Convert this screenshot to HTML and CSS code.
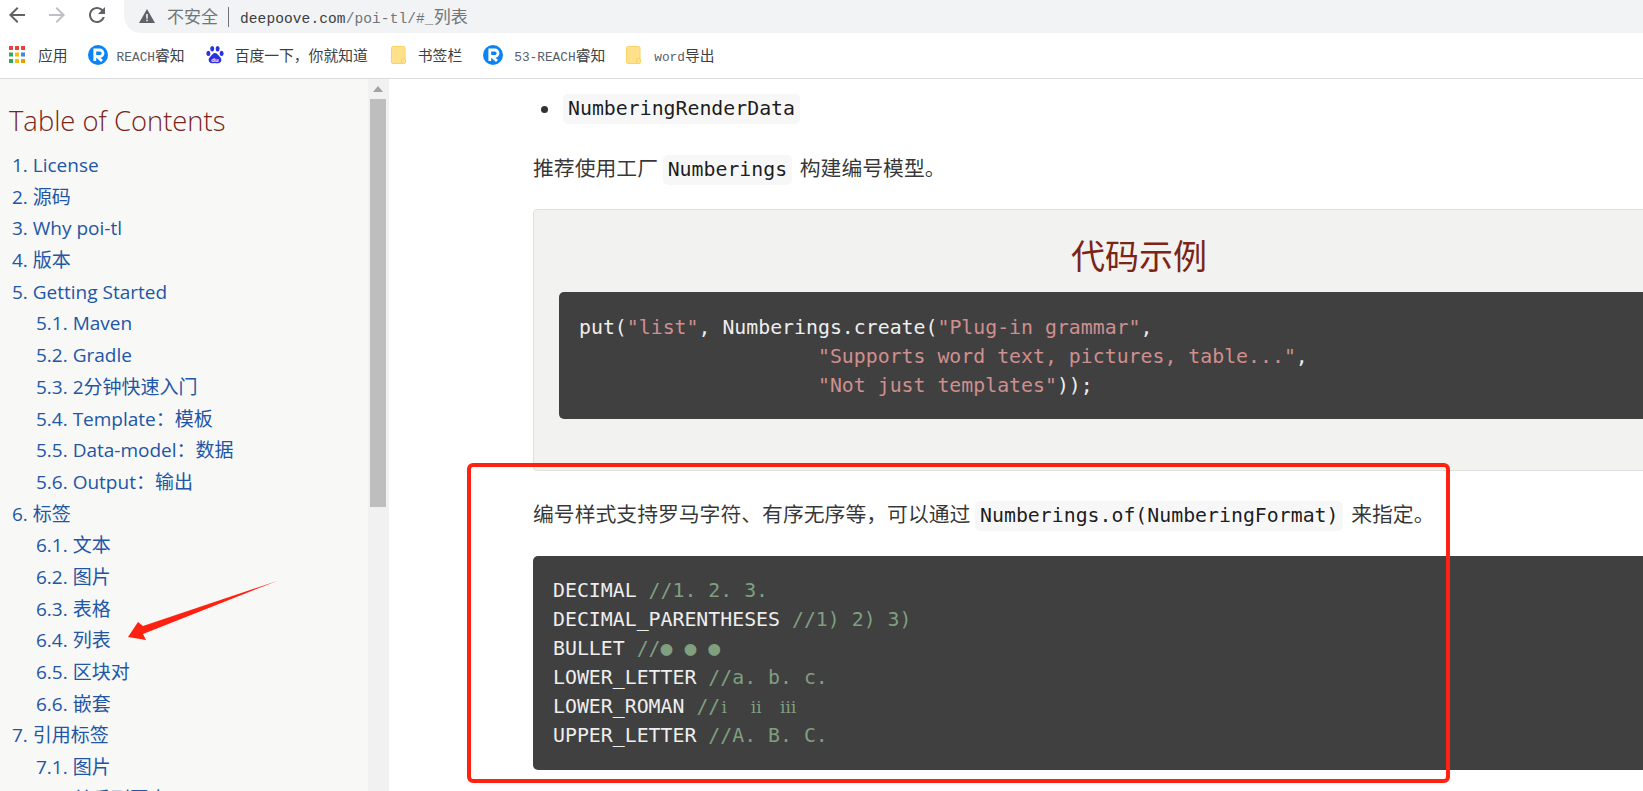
FILE: index.html
```html
<!DOCTYPE html>
<html lang="zh">
<head>
<meta charset="utf-8">
<title>poi-tl</title>
<link rel="stylesheet" href="styles.css">
</head>
<body>
<header class="toolbar">
  <div class="nav-btn"><svg viewBox="0 0 24 24" width="24" height="24"><path class="ic-dark" d="M20 11H7.83l5.59-5.59L12 4l-8 8 8 8 1.41-1.41L7.83 13H20v-2z"/></svg></div>
  <div class="nav-btn"><svg viewBox="0 0 24 24" width="24" height="24"><path class="ic-off" d="M12 4l-1.41 1.41L16.17 11H4v2h12.17l-5.58 5.59L12 20l8-8z"/></svg></div>
  <div class="nav-btn"><svg viewBox="0 0 24 24" width="24" height="24"><path class="ic-dark" d="M17.65 6.35C16.2 4.9 14.21 4 12 4c-4.42 0-7.99 3.58-7.99 8s3.57 8 7.99 8c3.73 0 6.84-2.55 7.73-6h-2.08c-.82 2.33-3.04 4-5.65 4-3.31 0-6-2.69-6-6s2.69-6 6-6c1.66 0 3.14.69 4.22 1.78L13 11h7V4l-2.35 2.35z"/></svg></div>
  <div class="omnibox">
    <svg class="warn" viewBox="0 0 16 16" width="16" height="16"><path class="ic-dark" d="M0 15 L8 1 L16 15 Z"/><rect x="7.2" y="6" width="1.6" height="4.6" fill="#f1f3f4"/><rect x="7.2" y="11.6" width="1.6" height="1.6" fill="#f1f3f4"/></svg>
    <span class="insecure">不安全</span>
    <span class="sep"></span>
    <span class="url"><span class="host">deepoove.com</span>/poi-tl/#_<span class="url-cjk">列表</span></span>
  </div>
</header>

<nav class="bookmarks">
  <div class="bm bm-apps">
    <svg viewBox="0 0 16 17" width="16" height="17">
      <rect x="0" y="0" width="4" height="4" fill="#ea4335"/><rect x="6" y="0" width="4" height="4" fill="#ea4335"/><rect x="12" y="0" width="4" height="4" fill="#ea4335"/>
      <rect x="0" y="6.5" width="4" height="4" fill="#34a853"/><rect x="6" y="6.5" width="4" height="4" fill="#fbbc05"/><rect x="12" y="6.5" width="4" height="4" fill="#4285f4"/>
      <rect x="0" y="13" width="4" height="4" fill="#34a853"/><rect x="6" y="13" width="4" height="4" fill="#fbbc05"/><rect x="12" y="13" width="4" height="4" fill="#f29900"/>
    </svg>
    <span>应用</span>
  </div>
  <div class="bm bm-reach">
    <svg viewBox="0 0 20 20" width="20" height="20"><circle cx="10" cy="10" r="10" fill="#0a84f5"/><path d="M6.800 16V5h5a3.200 3.200 0 0 1 0 6.400H9l5 4.600" fill="none" stroke="#fff" stroke-width="2.800"/></svg>
    <span><span class="lat">REACH</span>睿知</span>
  </div>
  <div class="bm bm-baidu">
    <svg viewBox="0 0 18 18" width="18" height="18"><ellipse cx="2.4" cy="7.4" rx="2" ry="2.6" fill="#2932e1"/><ellipse cx="6.2" cy="2.8" rx="2" ry="2.7" fill="#2932e1"/><ellipse cx="11.6" cy="2.8" rx="2" ry="2.7" fill="#2932e1"/><ellipse cx="15.6" cy="7.4" rx="2" ry="2.6" fill="#2932e1"/><path d="M9 7c-2 0-3 2-4.500 3.500C3 12 2.500 13 2.700 14.600 3 16.600 5 17.500 6.500 17.300c1-.1 1.800-.4 2.500-.4s1.500.3 2.500.4c1.500.2 3.500-.7 3.800-2.700.2-1.600-.3-2.600-1.800-4.100C12 9 11 7 9 7z" fill="#2932e1"/><text x="9" y="15.500" class="du">du</text></svg>
    <span>百度一下，你就知道</span>
  </div>
  <div class="bm bm-f1">
    <svg viewBox="0 0 15 18" width="15" height="18"><rect x=".5" y=".5" width="13.500" height="17" rx="1.500" class="folder"/><rect x="10.500" y="12.500" width="4" height="5" rx="1.500" class="folder"/></svg>
    <span>书签栏</span>
  </div>
  <div class="bm bm-reach2">
    <svg viewBox="0 0 20 20" width="20" height="20"><circle cx="10" cy="10" r="10" fill="#0a84f5"/><path d="M6.800 16V5h5a3.200 3.200 0 0 1 0 6.400H9l5 4.600" fill="none" stroke="#fff" stroke-width="2.800"/></svg>
    <span><span class="lat">53-REACH</span>睿知</span>
  </div>
  <div class="bm bm-f2">
    <svg viewBox="0 0 15 18" width="15" height="18"><rect x=".5" y=".5" width="13.500" height="17" rx="1.500" class="folder"/><rect x="10.500" y="12.500" width="4" height="5" rx="1.500" class="folder"/></svg>
    <span><span class="lat">word</span>导出</span>
  </div>
</nav>

<div class="page">
  <aside class="sidebar">
    <div class="toc">
      <h2 class="toc-title">Table of Contents</h2>
      <ul class="toc-list">
        <li><a>1. License</a></li>
        <li><a>2. 源码</a></li>
        <li><a>3. Why poi-tl</a></li>
        <li><a>4. 版本</a></li>
        <li><a>5. Getting Started</a>
          <ul>
            <li><a>5.1. Maven</a></li>
            <li><a>5.2. Gradle</a></li>
            <li><a>5.3. 2分钟快速入门</a></li>
            <li><a>5.4. Template<span class="colon">：</span>模板</a></li>
            <li><a>5.5. Data-model<span class="colon">：</span>数据</a></li>
            <li><a>5.6. Output<span class="colon">：</span>输出</a></li>
          </ul>
        </li>
        <li><a>6. 标签</a>
          <ul>
            <li><a>6.1. 文本</a></li>
            <li><a>6.2. 图片</a></li>
            <li><a>6.3. 表格</a></li>
            <li><a>6.4. 列表</a></li>
            <li><a>6.5. 区块对</a></li>
            <li><a>6.6. 嵌套</a></li>
          </ul>
        </li>
        <li><a>7. 引用标签</a>
          <ul>
            <li><a>7.1. 图片</a></li>
            <li><a>7.2. 单系列图表</a></li>
          </ul>
        </li>
      </ul>
    </div>
    <div class="scrollbar">
      <div class="scroll-arrow"></div>
      <div class="scroll-thumb"></div>
    </div>
  </aside>

  <main class="content">
    <ul class="bullets">
      <li><code>NumberingRenderData</code></li>
    </ul>
    <p class="para para-first">推荐使用工厂 <code>Numberings</code> 构建编号模型。</p>
    <section class="example">
      <h3 class="example-title">代码示例</h3>
      <pre class="listing listing-inner">put(<span class="str">"list"</span>, Numberings.create(<span class="str">"Plug-in grammar"</span>,
                    <span class="str">"Supports word text, pictures, table..."</span>,
                    <span class="str">"Not just templates"</span>));</pre>
    </section>
    <p class="para para-second">编号样式支持罗马字符、有序无序等，可以通过 <code>Numberings.of(NumberingFormat)</code> 来指定。</p>
    <pre class="listing listing-wide">DECIMAL <span class="cmt">//1. 2. 3.</span>
DECIMAL_PARENTHESES <span class="cmt">//1) 2) 3)</span>
BULLET <span class="cmt">//● ● ●</span>
LOWER_LETTER <span class="cmt">//a. b. c.</span>
LOWER_ROMAN <span class="cmt">//<span class="roman roman-first">ⅰ</span> <span class="roman">ⅱ</span> <span class="roman">ⅲ</span></span>
UPPER_LETTER <span class="cmt">//A. B. C.</span></pre>
  </main>
</div>

<div class="red-box"></div>
<svg class="red-arrow" viewBox="0 0 160 70" width="160" height="70"><path d="M157 1 L23 46 L18 42 L8 57 L26 60 L23 54 Z" fill="#ff2211"/></svg>
</body>
</html>
```

FILE: styles.css
```css
* { box-sizing: border-box; }
html, body { margin: 0; padding: 0; height: 791px; overflow: hidden; background: #fff; }
body { position: relative; font-family: "Noto Sans CJK SC", sans-serif; }

.toolbar { display: flex; align-items: flex-start; height: 33px; padding-left: 5px; gap: 16px; background: #fff; }
.nav-btn { width: 24px; height: 24px; margin-top: 3px; flex: none; }
.ic-dark { fill: #5f6368; }
.ic-off { fill: #bdc1c6; }
.omnibox { flex: 1; height: 33px; margin-left: -1px; padding-left: 15px; display: flex; align-items: center; background: #f1f3f4; border-radius: 0 0 0 17px; color: #5f6368; }
.warn { flex: none; margin-top: -2px; }
.insecure { margin: -2px 0 0 12px; font-size: 17px; line-height: 30px; color: #70757a; }
.sep { width: 1px; height: 20px; margin: 0 11px 0 10px; background: #70757a; }
.url { margin-top: -3px; font-family: "Liberation Mono", "Noto Sans CJK SC", monospace; font-size: 14.500px; letter-spacing: .1px; color: #70757a; }
.host { color: #3c4043; }
.url-cjk { font-family: "Noto Sans CJK SC", sans-serif; font-size: 17px; letter-spacing: 0; }

.bookmarks { display: flex; align-items: center; height: 46px; border-bottom: 1px solid #dadce0; padding-bottom: 2px; background: #fff; font-size: 14.800px; color: #3c4043; }
.bm { display: flex; align-items: center; flex: none; }
.bm svg { flex: none; }
.bm-apps { margin-left: 9px; gap: 13px; }
.bm-reach { margin-left: 20px; gap: 9px; }
.bm-baidu { margin-left: 21px; gap: 11px; }
.bm-f1 { margin-left: 23px; gap: 12px; }
.bm-reach2 { margin-left: 21px; gap: 11px; }
.bm-f2 { margin-left: 21px; gap: 13px; }
.lat { font-family: "Liberation Mono", monospace; font-size: 12.800px; color: #55606e; }
.du { font-family: "Liberation Sans", sans-serif; font-size: 6px; font-weight: 700; fill: #fff; text-anchor: middle; }
.folder { fill: #fee18a; stroke: #f7d468; stroke-width: 1; }

.page { display: flex; height: 712px; }
.sidebar { display: flex; flex: none; width: 389px; background: #f8f8f7; }
.toc { flex: 1; min-width: 0; overflow: hidden; }
.toc-title { margin: 22px 0 0 9px; font-family: "Open Sans", sans-serif; font-weight: 300; font-size: 27.400px; line-height: 40px; color: #7a2518; }
.toc-list, .toc-list ul { margin: 0; padding: 0; list-style: none; }
.toc-list { margin: 9px 0 0 12px; }
.toc-list ul { margin-left: 24px; }
.toc-list li { font-family: "Open Sans", "Noto Sans CJK SC", sans-serif; font-size: 19px; line-height: 31.680px; color: #2156a5; white-space: nowrap; }
.colon { font-family: "Noto Sans CJK TC", sans-serif; line-height: 0; }
.scrollbar { flex: none; width: 21px; background: #f1f1f1; padding: 0 3px 0 2px; }
.scroll-arrow { width: 0; height: 0; margin: 7px auto 0; border-left: 5px solid transparent; border-right: 5px solid transparent; border-bottom: 6px solid #a3a3a3; }
.scroll-thumb { height: 408px; margin-top: 7px; background: #bebebe; }

.content { flex: 1; min-width: 0; overflow: hidden; padding-left: 144px; color: rgba(0, 0, 0, .8); font-size: 20.830px; }
code { font-family: "DejaVu Sans Mono", monospace; font-size: 19.850px; line-height: 30px; display: inline-block; height: 30px; padding: 0 5px; background: #f7f7f8; border-radius: 5px; color: rgba(0, 0, 0, .9); }
.para code { margin-right: 3px; }
.bullets { margin: 15px 0 0; padding: 0 0 0 8px; height: 30px; line-height: 30px; list-style: none; }
.bullets li { display: flex; align-items: center; gap: 15px; }
.bullets li::before { content: ""; width: 7px; height: 7px; border-radius: 50%; background: #333; }
.para { margin: 0; line-height: 30px; white-space: nowrap; }
.para-first { margin-top: 28px; }
.para-second { margin-top: 27px; }
.example { width: 1200px; height: 262px; margin-top: 24px; padding: 0 0 0 25px; background: #f2f2f0; border: 1px solid #e0e0dc; border-radius: 4px; }
.example-title { margin: 0; padding-top: 17px; height: 82px; line-height: 55px; font-weight: 400; font-size: 34px; color: #7a2518; text-indent: 512px; }
.listing { width: 1200px; margin: 0; padding: 20px; background: #404040; border-radius: 5px; font-family: "DejaVu Sans Mono", "Noto Sans CJK SC", monospace; font-size: 19.850px; line-height: 29px; color: #eeeeee; }
.listing-inner { padding: 21px 20px 19px; }
.listing-wide { margin-top: 25px; }
.str { color: #cf8f8f; }
.cmt { color: #7f9f7f; }
.roman { display: inline-block; width: 20px; text-align: center; font-family: "DejaVu Serif", "Noto Sans CJK SC", serif; font-size: 17px; line-height: 20px; }
.roman-first { margin-left: -6px; }

.red-box { position: absolute; left: 467px; top: 463px; width: 983px; height: 320px; border: 4px solid #ff2211; border-radius: 6px; }
.red-arrow { position: absolute; left: 120px; top: 580px; }
```
